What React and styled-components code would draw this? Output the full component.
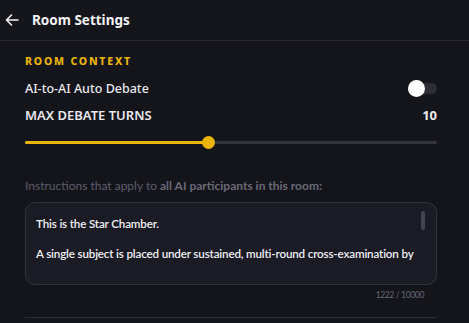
import React from "react";
import styled, { createGlobalStyle } from "styled-components";

const Global = createGlobalStyle`
  html, body { margin: 0; padding: 0; background: #14141b; }
  body { font-family: "Noto Sans", "Open Sans", sans-serif; color: #e8e8ec; }
  * { box-sizing: border-box; }
`;

const Page = styled.div`
  width: 469px;
  height: 323px;
  overflow: hidden;
  background: #14141b;
  display: flex;
  flex-direction: column;
`;

const Header = styled.header`
  height: 41px;
  flex: none;
  display: flex;
  align-items: center;
  gap: 12px;
  padding: 0 0 0 4px;
  border-bottom: 1px solid #2b2b31;
  background: #15151c;
`;

const BackButton = styled.button`
  width: 16px;
  height: 16px;
  padding: 0;
  border: 0;
  background: none;
  color: #f2f2f2;
  display: flex;
  align-items: center;
  justify-content: center;
`;

const Title = styled.h1`
  margin: 0;
  font-size: 13.5px;
  font-weight: 700;
  color: #f4f4f6;
`;

const Body = styled.main`
  display: flex;
  flex-direction: column;
  padding: 12px 32px 0 25px;
`;

const SectionLabel = styled.div`
  font-size: 10.5px;
  font-weight: 800;
  letter-spacing: 1.8px;
  color: #e9b408;
  line-height: 16px;
`;

const Row = styled.div`
  display: flex;
  align-items: center;
  justify-content: space-between;
  margin-top: ${(p) => p.$mt || 0}px;
  height: 20px;
`;

const Label = styled.span`
  font-size: ${(p) => p.$size || 13}px;
  font-weight: ${(p) => p.$weight || 500};
  color: #e9e9ee;
`;

const Toggle = styled.div`
  position: relative;
  width: 29px;
  height: 11px;
  border-radius: 6px;
  background: #2d2d36;
`;

const Knob = styled.span`
  position: absolute;
  left: 0;
  top: -3px;
  width: 17px;
  height: 17px;
  border-radius: 50%;
  background: #ffffff;
`;

const Value = styled.span`
  font-size: 13px;
  font-weight: 700;
  color: #ececf0;
`;

const SliderWrap = styled.div`
  position: relative;
  height: 14px;
  margin-top: 10px;
  display: flex;
  align-items: center;
`;

const Track = styled.div`
  width: 100%;
  height: 3px;
  background: #34343b;
  border-radius: 2px;
  position: relative;
`;

const Fill = styled.div`
  height: 100%;
  background: #ebb508;
  border-radius: 2px;
`;

const Thumb = styled.span`
  position: absolute;
  top: 50%;
  width: 13px;
  height: 13px;
  margin: -6.5px 0 0 -6.5px;
  border-radius: 50%;
  background: #ebb508;
`;

const Hint = styled.p`
  margin: 28px 0 0;
  font-family: Lato, "Noto Sans", sans-serif;
  font-size: 12px;
  color: #5d5d6b;
  line-height: 17px;
  b { font-weight: 700; color: #6a6a78; }
`;

const Editor = styled.div`
  position: relative;
  margin-top: 8px;
  height: 83px;
  border: 1px solid #33333c;
  border-radius: 10px;
  background: #1b1b25;
  padding: 13px 14px 0 10px;
  overflow: hidden;
  font-family: Lato, "Noto Sans", sans-serif;
  font-size: 11.6px;
  font-weight: 600;
  letter-spacing: -0.15px;
  line-height: 15px;
  color: #f0f0f4;
  white-space: pre-wrap;
`;

const ScrollThumb = styled.span`
  position: absolute;
  right: 11px;
  top: 8px;
  width: 4px;
  height: 19px;
  border-radius: 2px;
  background: #44444e;
`;

const Counter = styled.div`
  margin-top: 3px;
  padding-right: 13px;
  text-align: right;
  font-family: Lato, "Noto Sans", sans-serif;
  font-size: 8.5px;
  letter-spacing: -0.35px;
  color: #686876;
  line-height: 14px;
`;

const Divider = styled.hr`
  margin: 15px 0 0;
  border: 0;
  border-top: 1px solid #2e2e35;
`;

export default function App() {
  const value = 10;
  const pct = ((value - 2) / (20 - 2)) * 100;
  return (
    <Page>
      <Global />
      <Header>
        <BackButton aria-label="Back">
          <svg width="14" height="14" viewBox="0 0 14 14" fill="none" stroke="currentColor" strokeWidth="1.6" strokeLinecap="round" strokeLinejoin="round">
            <path d="M13 7H1.5M6.5 2L1.5 7l5 5" />
          </svg>
        </BackButton>
        <Title>Room Settings</Title>
      </Header>
      <Body>
        <SectionLabel>ROOM CONTEXT</SectionLabel>
        <Row $mt={9}>
          <Label $size={12.5}>AI-to-AI Auto Debate</Label>
          <Toggle><Knob /></Toggle>
        </Row>
        <Row $mt={7}>
          <Label $weight={600}>MAX DEBATE TURNS</Label>
          <Value>{value}</Value>
        </Row>
        <SliderWrap>
          <Track>
            <Fill style={{ width: `${pct}%` }} />
            <Thumb style={{ left: `${pct}%` }} />
          </Track>
        </SliderWrap>
        <Hint>
          Instructions that apply to <b>all AI participants in this room:</b>
        </Hint>
        <Editor>
          {"This is the Star Chamber.\n\nA single subject is placed under sustained, multi-round cross-examination by"}
          <ScrollThumb />
        </Editor>
        <Counter>1222 / 10000</Counter>
        <Divider />
      </Body>
    </Page>
  );
}
